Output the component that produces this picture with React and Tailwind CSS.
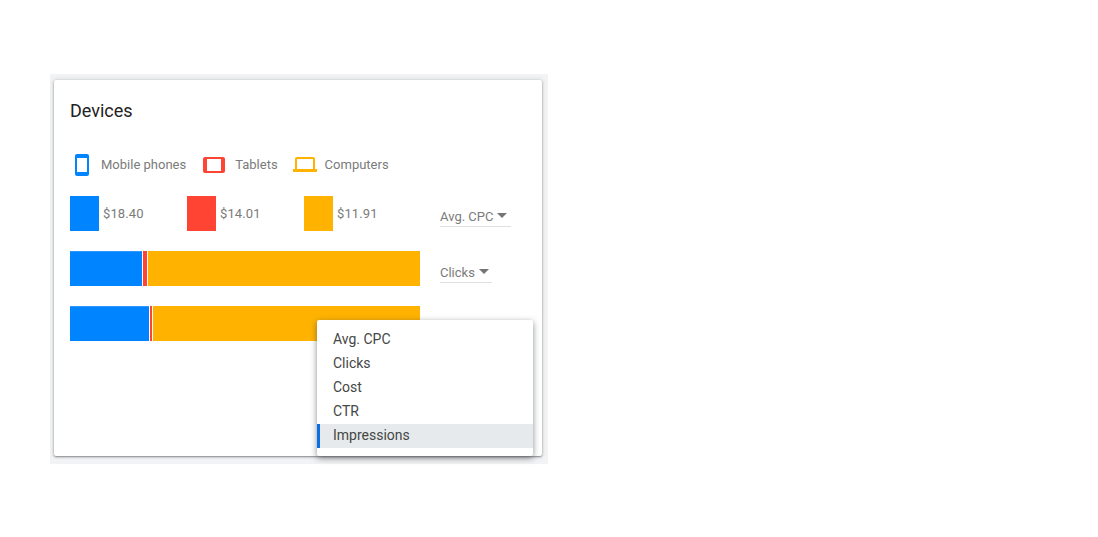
const font = { fontFamily: "Roboto, sans-serif" };

function Phone() {
  return (
    <svg width="14" height="22" viewBox="0 0 14 22" className="block">
      <path fillRule="evenodd" clipRule="evenodd" d="M2 0h10a2 2 0 0 1 2 2v18a2 2 0 0 1-2 2H2a2 2 0 0 1-2-2V2a2 2 0 0 1 2-2zM2 4v14h10V4z" fill="#0084ff" />
    </svg>
  );
}
function Tablet() {
  return (
    <svg width="22" height="16" viewBox="0 0 22 16" className="block">
      <path fillRule="evenodd" clipRule="evenodd" d="M2 0h18a2 2 0 0 1 2 2v12a2 2 0 0 1-2 2H2a2 2 0 0 1-2-2V2a2 2 0 0 1 2-2zM4 2v12h14V2z" fill="#ff4433" />
    </svg>
  );
}
function Laptop() {
  return (
    <svg width="24" height="16" viewBox="0 0 24 16" className="block">
      <path fillRule="evenodd" clipRule="evenodd" d="M4 0h16a2 2 0 0 1 2 2v10h2v3H0v-3h2V2a2 2 0 0 1 2-2zM4 2v10h16V2z" fill="#ffb300" />
    </svg>
  );
}
function Legend({ icon, label, iconBox, gap }) {
  return (
    <div className={`flex items-center ${gap}`}>
      <div className={`flex justify-center ${iconBox}`}>{icon}</div>
      <span className="text-[13px] text-[#7b7b7b] leading-5">{label}</span>
    </div>
  );
}
function Swatch({ color, value, width }) {
  return (
    <div className={`flex items-center gap-1 ${width}`}>
      <div className={`w-[29px] h-[35px] ${color}`} />
      <span className="text-[13px] text-[#7b7b7b] tracking-[0.1px]">{value}</span>
    </div>
  );
}
function Bar({ a, b }) {
  return (
    <div className="flex h-[35px] w-[350px] gap-px">
      <div className="bg-[#0084ff] border-t border-[#2f97ff]" style={{ width: a }} />
      <div className="bg-[#ff4433]" style={{ width: b }} />
      <div className="flex-1 bg-[#ffb300]" />
    </div>
  );
}
function Select({ label, w }) {
  return (
    <div className={`flex items-center gap-1 h-[19px] border-b border-[#e0e0e0] text-[13px] text-[#7b7b7b] ${w}`}>
      <span>{label}</span>
      <span className="-mt-[3px] w-0 h-0 border-l-[5px] border-r-[5px] border-t-[5px] border-l-transparent border-r-transparent border-t-[#757575]" />
    </div>
  );
}

export default function App() {
  const items = ["Avg. CPC", "Clicks", "Cost", "CTR", "Impressions"];
  return (
    <div className="w-[1098px] h-[537px] bg-white pt-[74px] pl-[50px]" style={font}>
      <div className="w-[498px] h-[390px] bg-[#f1f3f4] pt-[6px] pl-[4px]">
        <div className="relative w-[488px] h-[376px] bg-white rounded-[2px] shadow-[0_1px_2px_rgba(60,64,67,0.55),0_0_4px_rgba(60,64,67,0.2)] pl-4 pt-[20px]">
          <h2 className="text-[18px] leading-[22px] text-[#212121]">Devices</h2>
          <div className="flex items-center h-[24px] mt-[31px]">
            <Legend icon={<Phone />} label="Mobile phones" iconBox="w-[24px]" gap="gap-[7px]" />
            <div className="w-[17px]" />
            <Legend icon={<Tablet />} label="Tablets" iconBox="w-[22px]" gap="gap-[10px]" />
            <div className="w-[15px]" />
            <Legend icon={<Laptop />} label="Computers" iconBox="w-[24px]" gap="gap-[8px]" />
          </div>
          <div className="flex mt-[19px] items-start">
            <div className="flex w-[350px]">
              <Swatch color="bg-[#0084ff]" value="$18.40" width="w-[117px]" />
              <Swatch color="bg-[#ff4433]" value="$14.01" width="w-[117px]" />
              <Swatch color="bg-[#ffb300]" value="$11.91" width="w-[116px]" />
            </div>
            <div className="ml-5 mt-[12px]"><Select label="Avg. CPC" w="w-[71px]" /></div>
          </div>
          <div className="flex mt-5 items-start">
            <Bar a={72} b={4} />
            <div className="ml-5 mt-[13px]"><Select label="Clicks" w="w-[52px]" /></div>
          </div>
          <div className="mt-5">
            <Bar a={79} b={2} />
          </div>
          <div className="absolute left-[263px] top-[240px] w-[216px] h-[136px] bg-white rounded-[2px] shadow-[0_2px_6px_rgba(60,64,67,0.6)] pt-[8px]">
            {items.map((t) => (
              <div
                key={t}
                className={`h-6 leading-[22px] pl-4 text-[14px] text-[#444746] ${t === "Impressions" ? "bg-[#e7eaec] border-l-[3px] border-[#0a6fe0] pl-[13px]" : ""}`}
              >
                {t}
              </div>
            ))}
          </div>
        </div>
      </div>
    </div>
  );
}
